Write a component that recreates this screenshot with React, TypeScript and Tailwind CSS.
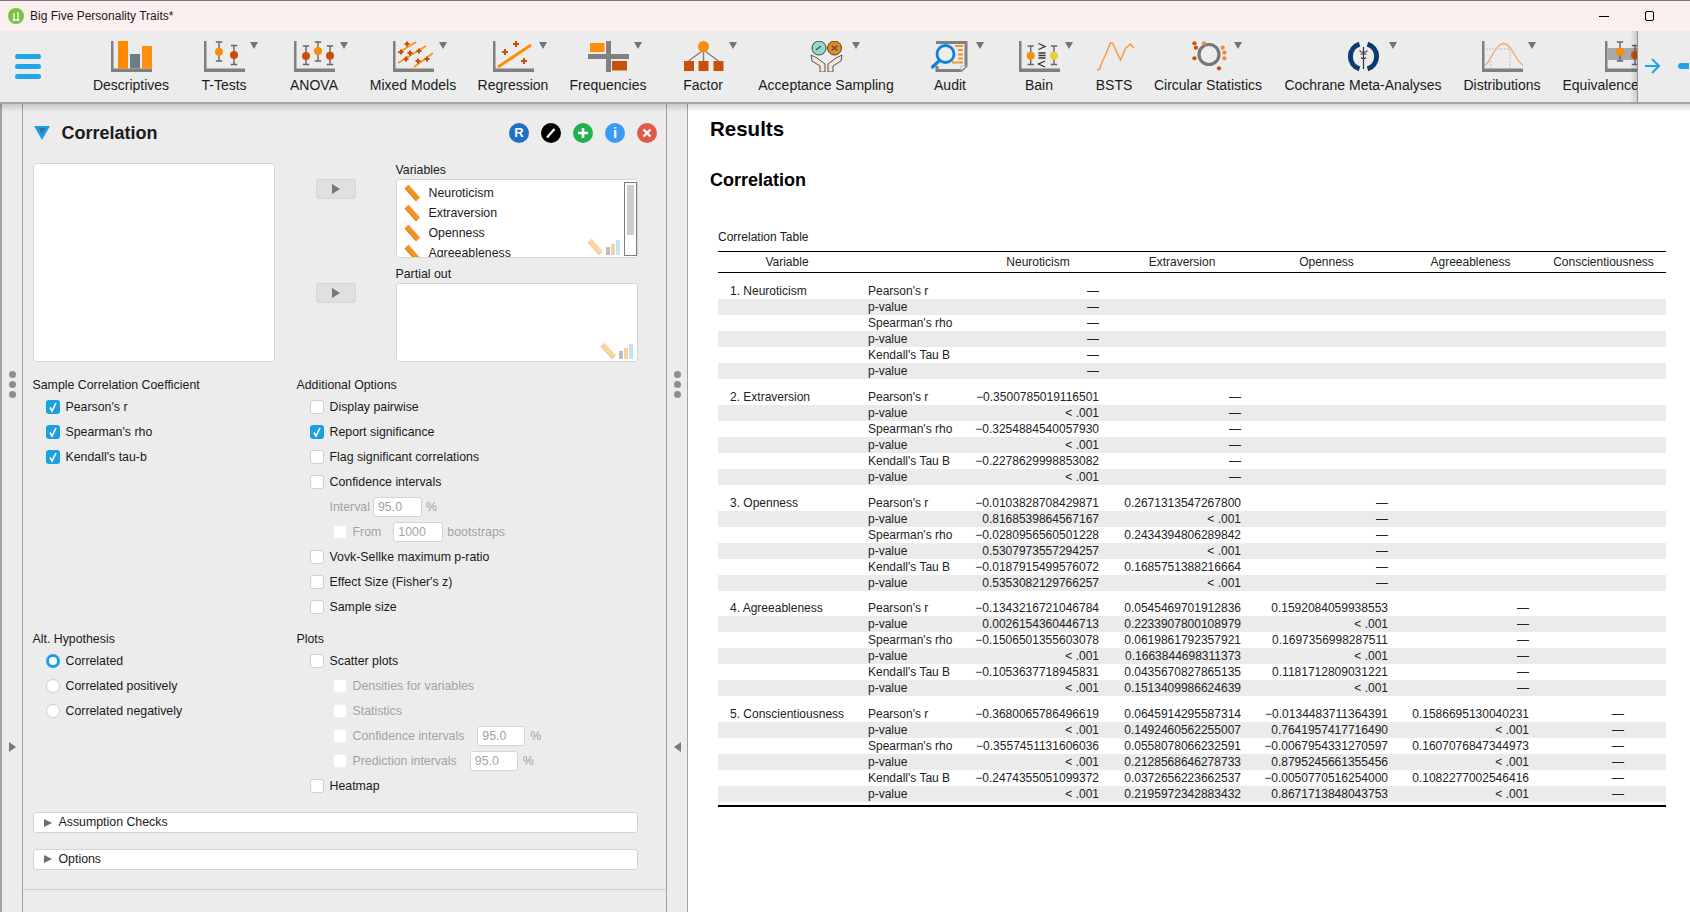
import React from "react";

const ORANGE = "#f98e0b";
const RUST = "#c8500a";
const AXIS = "#808080";

function Axes() {
  return (
    <>
      <rect x="0" y="0" width="2.5" height="31" fill={AXIS} />
      <rect x="0" y="27.5" width="41" height="3.5" fill={AXIS} />
    </>
  );
}

function Whisker({ x, top, bottom, dot, color, r = 4 }: { x: number; top: number; bottom: number; dot: number; color: string; r?: number }) {
  return (
    <>
      <path d={`M${x - 3.2} ${top}H${x + 3.2}M${x} ${top}V${bottom}M${x - 3.2} ${bottom}H${x + 3.2}`} stroke="#666" strokeWidth="1.4" fill="none" />
      <circle cx={x} cy={dot} r={r} fill={color} />
    </>
  );
}

function Plus({ x, y, color = RUST, s = 3 }: { x: number; y: number; color?: string; s?: number }) {
  return <path d={`M${x - s} ${y}H${x + s}M${x} ${y - s}V${y + s}`} stroke={color} strokeWidth="2" fill="none" />;
}

function Icon({ children, w = 41 }: { children: React.ReactNode; w?: number }) {
  return (
    <svg viewBox={`0 0 ${w} 31`} className="block h-[31px] shrink-0" width={w}>
      {children}
    </svg>
  );
}

const icons: Record<string, React.ReactNode> = {
  descriptives: (
    <Icon>
      <Axes />
      <rect x="7" y="0" width="10" height="27.5" fill="#ff8a00" />
      <rect x="19" y="13" width="10" height="14.5" fill="#6f7b85" />
      <rect x="31" y="5" width="10" height="22.5" fill="#ff8f10" />
    </Icon>
  ),
  ttests: (
    <Icon>
      <Axes />
      <Whisker x={15} top={1} bottom={20} dot={10.7} color={ORANGE} />
      <Whisker x={30} top={4.5} bottom={23.5} dot={14} color={RUST} />
    </Icon>
  ),
  anova: (
    <Icon>
      <Axes />
      <Whisker x={12} top={5} bottom={23.5} dot={15} color={RUST} />
      <Whisker x={24} top={1} bottom={20} dot={10} color={ORANGE} />
      <Whisker x={36} top={5} bottom={23.5} dot={14.7} color={RUST} />
    </Icon>
  ),
  mixed: (
    <Icon>
      <Axes />
      <path d="M5 12L23 1M5 22L33 5M21 26L40 12" stroke="#f4932a" strokeWidth="1.8" fill="none" />
      <Plus x={14} y={3} s={2.5} />
      <Plus x={8} y={11} s={2.5} />
      <Plus x={17} y={12} s={2.5} />
      <Plus x={26} y={10} s={2.5} />
      <Plus x={13} y={18} s={2.5} />
      <Plus x={25} y={20} s={2.5} />
      <Plus x={34} y={18} s={2.5} />
    </Icon>
  ),
  regression: (
    <Icon>
      <Axes />
      <path d="M5 26L38 4" stroke="#f98e0b" strokeWidth="3" fill="none" />
      <Plus x={23} y={3} />
      <Plus x={12} y={11} />
      <Plus x={31} y={20} />
    </Icon>
  ),
  frequencies: (
    <Icon>
      <rect x="2" y="2" width="14.5" height="9" fill="#ff8f00" />
      <rect x="18" y="0" width="5" height="31" fill={AXIS} />
      <rect x="0" y="13" width="41" height="5" fill={AXIS} />
      <rect x="24" y="20" width="15" height="9.5" fill={RUST} />
    </Icon>
  ),
  factor: (
    <Icon>
      <path d="M20.5 9L5.5 20M20.5 9V20M20.5 9L35.5 20" stroke={AXIS} strokeWidth="1.5" fill="none" />
      <circle cx="20.5" cy="5.5" r="5.5" fill={ORANGE} />
      <rect x="1" y="20" width="10" height="10" fill={RUST} />
      <rect x="15.5" y="20" width="10" height="10" fill={RUST} />
      <rect x="30.5" y="20" width="10" height="10" fill={RUST} />
    </Icon>
  ),
  acceptance: (
    <Icon>
      <path d="M5 14L6 20L14 25V31H19V23L11 17ZM36 14L35 20L27 25V31H22V23L30 17Z" fill="#f7e6d3" stroke="#555" strokeWidth="1" />
      <circle cx="13" cy="7" r="7" fill="#8fdcc8" stroke="#444" strokeWidth="1" />
      <circle cx="28.5" cy="7" r="7" fill="#e88a1a" stroke="#444" strokeWidth="1" />
      <path d="M10 9L15 5M25.5 4.5L31.5 9.5M31.5 4.5L25.5 9.5" stroke="#555" strokeWidth="1.6" fill="none" />
    </Icon>
  ),
  audit: (
    <Icon>
      <path d="M6 1.5H36V25L31 29.5H7V25" stroke={AXIS} strokeWidth="3" fill="none" />
      <path d="M31 29.5V25H36" stroke="#b0b0b0" strokeWidth="1" fill="#fff" />
      <path d="M25 5H33M28 9H33M28 13.5H33M28 17.5H33M22 21.5H33" stroke="#f4932a" strokeWidth="2.2" fill="none" />
      <circle cx="15.5" cy="13" r="8.5" stroke="#0f7fe0" strokeWidth="2.8" fill="#ececec" fillOpacity="0.6" />
      <path d="M9 20L2.5 26" stroke="#0f7fe0" strokeWidth="3.2" strokeLinecap="round" fill="none" />
    </Icon>
  ),
  bain: (
    <Icon>
      <Axes />
      <Whisker x={11.7} top={5} bottom={23.5} dot={14.7} color={ORANGE} />
      <Whisker x={35} top={5} bottom={23.5} dot={14.7} color="#e6d22e" />
      <path d="M19.5 2.5L26 5.5L19.5 8.5M19.5 12H26.5M19.5 14.5H26.5M19.5 17H26.5M26 20L19.5 23L26 26" stroke="#333" strokeWidth="1.3" fill="none" />
    </Icon>
  ),
  bsts: (
    <Icon>
      <path d="M3.2 29L5.5 28.3L8.2 20.7L11.5 14L16.5 1.7L18.8 2.3L23.2 12.3L26.5 19L31.5 7.3L36.5 3L39.8 7.3" stroke="#f59a45" strokeWidth="1.5" fill="none" />
    </Icon>
  ),
  circular: (
    <Icon>
      <circle cx="21" cy="13.5" r="10" stroke="#777" strokeWidth="3.2" fill="none" />
      {[
        [6.4, 2.3, RUST],
        [16, 2.3, "#f08a2b"],
        [8, 6.7, RUST],
        [34.7, 6.7, "#f08a2b"],
        [36.4, 11.7, "#f08a2b"],
        [36.4, 17.3, "#f08a2b"],
        [31, 27.3, RUST],
        [6.4, 17.3, RUST],
      ].map(([x, y, c], i) => (
        <circle key={i} cx={x as number} cy={y as number} r="2.1" fill={c as string} />
      ))}
    </Icon>
  ),
  cochrane: (
    <Icon>
      <path d="M16.5 3.1A13 13 0 0 0 16.5 27.9M24.5 3.1A13 13 0 0 1 24.5 27.9" stroke="#0b3a70" strokeWidth="5" fill="none" />
      <path d="M20.5 6V28M16.5 9.5C18 12 23 12 24.5 9.5M17.5 13H23.5M18 16.5C20 18.5 21 18.5 23 16.5" stroke="#333" strokeWidth="1.2" fill="none" />
    </Icon>
  ),
  distributions: (
    <Icon>
      <Axes />
      <path d="M4 8H28M28 8V27" stroke="#b5b5b5" strokeWidth="1" strokeDasharray="1.5 1.5" fill="none" />
      <path d="M9 20V27" stroke="#b5b5b5" strokeWidth="1" strokeDasharray="1.5 1.5" fill="none" />
      <path d="M3.5 24C9 20 13 3 22 2.5C30 3 33 20 41 24" stroke="#f5a875" strokeWidth="1.4" fill="none" />
    </Icon>
  ),
  equivalence: (
    <Icon>
      <Axes />
      <rect x="2.5" y="7" width="38.5" height="12" fill="#a8a8a8" />
      <Whisker x={15} top={1} bottom={20} dot={10.7} color={ORANGE} />
      <Whisker x={30} top={4.5} bottom={23.5} dot={14} color={RUST} />
    </Icon>
  ),
};

const tools = [
  { label: "Descriptives", icon: "descriptives", w: "w-[100px]", menu: false },
  { label: "T-Tests", icon: "ttests", w: "w-[86px]", menu: true },
  { label: "ANOVA", icon: "anova", w: "w-[94px]", menu: true },
  { label: "Mixed Models", icon: "mixed", w: "w-[104px]", menu: true },
  { label: "Regression", icon: "regression", w: "w-[96px]", menu: true },
  { label: "Frequencies", icon: "frequencies", w: "w-[94px]", menu: true },
  { label: "Factor", icon: "factor", w: "w-[96px]", menu: true },
  { label: "Acceptance Sampling", icon: "acceptance", w: "w-[150px]", menu: true },
  { label: "Audit", icon: "audit", w: "w-[98px]", menu: true },
  { label: "Bain", icon: "bain", w: "w-[80px]", menu: true },
  { label: "BSTS", icon: "bsts", w: "w-[70px]", menu: false },
  { label: "Circular Statistics", icon: "circular", w: "w-[118px]", menu: true },
  { label: "Cochrane Meta-Analyses", icon: "cochrane", w: "w-[192px]", menu: true },
  { label: "Distributions", icon: "distributions", w: "w-[86px]", menu: true },
  { label: "Equivalence T-Tests", icon: "equivalence", w: "w-[160px]", menu: true },
];

function Ruler({ faded = false }: { faded?: boolean }) {
  return (
    <svg viewBox="0 0 16 16" className={`block h-4 w-4 shrink-0 ${faded ? "opacity-40" : ""}`}>
      <path d="M2.5 1.5L14 14.5" stroke="#f59322" strokeWidth="5.5" fill="none" />
      <path d="M1 3.5L12.5 16" stroke="#c96f12" strokeWidth="0.8" fill="none" />
    </svg>
  );
}

function TypeBars() {
  return (
    <div className="flex h-4 items-end gap-px">
      <div className="h-2 w-1 bg-[#bdbdbd]" />
      <div className="h-[11px] w-1 bg-[#fbcf9f]" />
      <div className="h-[15px] w-1 bg-[#bfe4fb]" />
    </div>
  );
}

function Check({ on = false, dim = false }: { on?: boolean; dim?: boolean }) {
  if (on) {
    return (
      <span className="flex h-[14px] w-[14px] shrink-0 items-center justify-center rounded-[3px] bg-[#1ba1e2]">
        <svg viewBox="0 0 14 14" className="h-[14px] w-[14px]">
          <path d="M4 7.5L6 11L10 3" stroke="#fff" strokeWidth="1.6" fill="none" />
        </svg>
      </span>
    );
  }
  return <span className={`block h-[14px] w-[14px] shrink-0 rounded-[3px] bg-white ${dim ? "border border-[#f0f0f0]" : "border border-[#cfcfcf]"}`} />;
}

function Opt({ label, on, dim, inset }: { label: string; on?: boolean; dim?: boolean; inset?: boolean }) {
  return (
    <div className={`flex h-[25px] items-center gap-[6px] ${inset ? "pl-[36px]" : "pl-[13px]"}`}>
      <Check on={on} dim={dim} />
      <span className={dim ? "text-[#a3a3a3]" : ""}>{label}</span>
    </div>
  );
}

function Radio({ label, on }: { label: string; on?: boolean }) {
  return (
    <div className="flex h-[25px] items-center gap-[6px] pl-[13px]">
      <span className={`block h-[14px] w-[14px] rounded-full bg-white ${on ? "border-[3px] border-[#1ba1e2]" : "border border-[#cfcfcf]"}`} />
      <span>{label}</span>
    </div>
  );
}

function NumBox({ value, w }: { value: string; w: string }) {
  return (
    <span className={`flex h-5 items-center rounded-[3px] border border-[#d4d4d4] bg-white pl-1 text-[#a3a3a3] ${w}`}>{value}</span>
  );
}

function Expander({ label }: { label: string }) {
  return (
    <div className="flex h-[21px] items-center rounded-[3px] border border-[#d2d2d2] bg-white pl-[10px]">
      <span className="h-0 w-0 border-y-[4.5px] border-l-[8px] border-y-transparent border-l-[#6e6e6e]" />
      <span className="ml-[7px]">{label}</span>
    </div>
  );
}

function Dots() {
  return (
    <div className="flex flex-col gap-[3px]">
      <span className="block h-[7px] w-[7px] rounded-full bg-[#8e8e8e]" />
      <span className="block h-[7px] w-[7px] rounded-full bg-[#8e8e8e]" />
      <span className="block h-[7px] w-[7px] rounded-full bg-[#8e8e8e]" />
    </div>
  );
}

function AssignButton({ className }: { className: string }) {
  return (
    <div className={`flex h-5 w-[40px] items-center justify-center rounded-[3px] border border-[#d6d6d6] bg-[#e0e0e0] ${className}`}>
      <span className="h-0 w-0 border-y-[5px] border-l-[8px] border-y-transparent border-l-[#777]" />
    </div>
  );
}

const TESTS = ["Pearson's r", "p-value", "Spearman's rho", "p-value", "Kendall's Tau B", "p-value"];
const P = "< .001";
const DASHES = ["—", "—", "—", "—", "—", "—"];

const groups: { name: string; gap: string; cols: string[][] }[] = [
  { name: "1. Neuroticism", gap: "h-[10px]", cols: [DASHES] },
  {
    name: "2. Extraversion",
    gap: "h-[10px]",
    cols: [["−0.3500785019116501", P, "−0.3254884540057930", P, "−0.2278629998853082", P], DASHES],
  },
  {
    name: "3. Openness",
    gap: "h-[10px]",
    cols: [
      ["−0.0103828708429871", "0.8168539864567167", "−0.0280956560501228", "0.5307973557294257", "−0.0187915499576072", "0.5353082129766257"],
      ["0.2671313547267800", P, "0.2434394806289842", P, "0.1685751388216664", P],
      DASHES,
    ],
  },
  {
    name: "4. Agreeableness",
    gap: "h-[9px]",
    cols: [
      ["−0.1343216721046784", "0.0026154360446713", "−0.1506501355603078", P, "−0.1053637718945831", P],
      ["0.0545469701912836", "0.2233907800108979", "0.0619861792357921", "0.1663844698311373", "0.0435670827865135", "0.1513409986624639"],
      ["0.1592084059938553", P, "0.1697356998287511", P, "0.1181712809031221", P],
      DASHES,
    ],
  },
  {
    name: "5. Conscientiousness",
    gap: "h-[10px]",
    cols: [
      ["−0.3680065786496619", P, "−0.3557451131606036", P, "−0.2474355051099372", P],
      ["0.0645914295587314", "0.1492460562255007", "0.0558078066232591", "0.2128568646278733", "0.0372656223662537", "0.2195972342883432"],
      ["−0.0134483711364391", "0.7641957417716490", "−0.0067954331270597", "0.8795245661355456", "−0.0050770516254000", "0.8671713848043753"],
      ["0.1586695130040231", P, "0.1607076847344973", P, "0.1082277002546416", P],
      DASHES,
    ],
  },
];

function ResultsTable() {
  return (
    <table className="w-[948px] table-fixed border-collapse text-[12px] leading-[16px] text-[#222]">
      <colgroup>
        <col className="w-[138px]" />
        <col className="w-[109px]" />
        <col className="w-[146px]" />
        <col className="w-[142px]" />
        <col className="w-[147px]" />
        <col className="w-[141px]" />
        <col className="w-[125px]" />
      </colgroup>
      <thead>
        <tr className="h-[21px] border-y border-black">
          <th className="text-center font-normal">Variable</th>
          <th />
          <th className="text-center font-normal">Neuroticism</th>
          <th className="text-center font-normal">Extraversion</th>
          <th className="text-center font-normal">Openness</th>
          <th className="text-center font-normal">Agreeableness</th>
          <th className="text-center font-normal">Conscientiousness</th>
        </tr>
      </thead>
      {groups.map((g) => (
        <tbody key={g.name}>
          <tr className={g.gap}>
            <td colSpan={7} className="p-0" />
          </tr>
          {TESTS.map((t, i) => (
            <tr key={i} className={`h-4 ${i % 2 === 1 ? "bg-[#ebebeb]" : ""}`}>
              <td className="whitespace-nowrap p-0 pl-[12px]">{i === 0 ? g.name : ""}</td>
              <td className="whitespace-nowrap p-0 pl-[12px]">{t}</td>
              {[0, 1, 2, 3, 4].map((c) => (
                <td key={c} className={`whitespace-nowrap p-0 text-right ${c === 4 ? "pr-[42px]" : "pr-[12px]"}`}>
                  {g.cols[c] ? g.cols[c][i] : ""}
                </td>
              ))}
            </tr>
          ))}
        </tbody>
      ))}
    </table>
  );
}

export default function App() {
  return (
    <div className="flex h-[912px] w-[1690px] flex-col overflow-hidden bg-white font-['Liberation_Sans',Arial,sans-serif] text-[12.35px] text-[#1a1a1a]">
      {/* Title bar */}
      <div className="flex h-[31px] shrink-0 items-center border-t border-[#777] bg-[#faf0f0] pl-[8px] pr-[36px] text-[12px]">
        <svg viewBox="0 0 16 16" className="h-4 w-4">
          <circle cx="8" cy="8" r="8" fill="#7cc242" />
          <path d="M6 11.5V5M10 11.5V4M4.5 12H11.5" stroke="#fff" strokeWidth="1.3" fill="none" />
        </svg>
        <span className="ml-[6px]">Big Five Personality Traits*</span>
        <div className="ml-auto flex items-center gap-[36px]">
          <span className="block h-px w-[10px] bg-black" />
          <span className="block h-[10px] w-[9px] rounded-[2px] border border-black" />
        </div>
      </div>

      {/* Ribbon */}
      <div className="flex h-[73px] shrink-0 border-b-2 border-[#a3a3a3] bg-[#ececec] text-[14px]">
        <div className="flex min-w-0 flex-1 overflow-hidden">
          <div className="flex w-[81px] shrink-0 flex-col gap-[5px] pl-[15px] pt-[23px]">
            <span className="block h-[5px] w-[26px] rounded-full bg-[#1fa5ea]" />
            <span className="block h-[5px] w-[26px] rounded-full bg-[#1fa5ea]" />
            <span className="block h-[5px] w-[26px] rounded-full bg-[#1fa5ea]" />
          </div>
          {tools.map((t) => (
            <div key={t.label} className={`relative flex shrink-0 flex-col items-center pt-[10px] ${t.w}`}>
              {icons[t.icon]}
              <span className="mt-[5px] whitespace-nowrap leading-[16px]">{t.label}</span>
              {t.menu && t.icon !== "equivalence" && (
                <span className="absolute left-[calc(50%+26px)] top-[11px] h-0 w-0 border-x-[4px] border-t-[7px] border-x-transparent border-t-[#6b7680]" />
              )}
            </div>
          ))}
        </div>
        <div className="relative flex w-[53px] shrink-0 items-center overflow-visible border-l border-[#a8a8a8] pl-[6px] pb-[2px]">
          <div className="absolute right-full top-0 h-full w-2 bg-linear-to-l from-black/15 to-transparent" />
          <svg viewBox="0 0 16 18" className="h-[18px] w-4 shrink-0">
            <path d="M1 9H14M8 2L15 9L8 16" stroke="#1fa5ea" strokeWidth="2" fill="none" />
          </svg>
          <div className="ml-[18px] flex h-[28px] w-[11px] shrink-0 items-center overflow-hidden">
            <svg viewBox="0 0 28 28" className="h-[28px] w-[28px] shrink-0">
              <path d="M3 14H25M14 3V25" stroke="#1fa5ea" strokeWidth="6" strokeLinecap="round" fill="none" />
            </svg>
          </div>
        </div>
      </div>

      {/* Main area */}
      <div className="relative flex min-h-0 flex-1">
        <div className="pointer-events-none absolute inset-x-0 top-0 z-10 h-2 bg-linear-to-b from-black/15 to-transparent" />

        {/* Left handle */}
        <div className="relative flex w-[23px] shrink-0 flex-col items-center border-l-2 border-r border-[#a3a3a3] bg-[#ececec] pt-[267px]">
          <Dots />
          <span className="mt-[344px] h-0 w-0 border-y-[5.5px] border-l-[7px] border-y-transparent border-l-[#7a7a7a]" />
        </div>

        {/* Options panel */}
        <div className="flex w-[643px] shrink-0 flex-col bg-[#ececec]">
          <div className="pl-[9.5px] pr-[28px]">
            <div className="-mr-[19px] mt-[15px] flex h-[28px] items-center">
              <svg viewBox="0 0 16 14" className="ml-px h-[14px] w-4">
                <path d="M0 0H16L8 14Z" fill="#1c9ee6" />
                <path d="M5 2H11L8 8Z" fill="#4a6a80" />
              </svg>
              <span className="ml-[12px] text-[18px] font-bold">Correlation</span>
              <div className="ml-auto flex items-center gap-[12px]">
                <span className="flex h-5 w-5 items-center justify-center rounded-full bg-[#1f6fc8] text-[13px] font-bold text-white">R</span>
                <span className="flex h-5 w-5 items-center justify-center rounded-full bg-black">
                  <svg viewBox="0 0 20 20" className="h-5 w-5">
                    <path d="M6 14.5L13.5 6" stroke="#fff" strokeWidth="2.2" fill="none" />
                  </svg>
                </span>
                <span className="flex h-5 w-5 items-center justify-center rounded-full bg-[#22b14c]">
                  <svg viewBox="0 0 20 20" className="h-5 w-5">
                    <path d="M5 10H15M10 5V15" stroke="#fff" strokeWidth="2.6" fill="none" />
                  </svg>
                </span>
                <span className="flex h-5 w-5 items-center justify-center rounded-full bg-[#3a9bf5] text-[15px] font-bold text-white">i</span>
                <span className="flex h-5 w-5 items-center justify-center rounded-full bg-[#e05a4b]">
                  <svg viewBox="0 0 20 20" className="h-5 w-5">
                    <path d="M6.5 6.5L13.5 13.5M13.5 6.5L6.5 13.5" stroke="#fff" strokeWidth="2.4" fill="none" />
                  </svg>
                </span>
              </div>
            </div>

            <div className="mt-[16px] flex">
              <div className="h-[199px] w-[242px] shrink-0 rounded-[3px] border border-[#d6d6d6] bg-white" />
              <div className="ml-[41px] w-[40px] shrink-0">
                <AssignButton className="mt-[16px]" />
                <AssignButton className="mt-[84px]" />
              </div>
              <div className="ml-[40px] w-[242px] shrink-0">
                <div className="h-[14px] leading-[14px]">Variables</div>
                <div className="relative mt-[2px] h-[79px] overflow-hidden rounded-[3px] border border-[#d6d6d6] bg-white pl-[7px] pt-[3px]">
                  {["Neuroticism", "Extraversion", "Openness", "Agreeableness"].map((v) => (
                    <div key={v} className="flex h-5 items-center gap-[9px]">
                      <Ruler />
                      <span>{v}</span>
                    </div>
                  ))}
                  <div className="absolute right-[17px] top-[59px] flex items-end gap-[3px]">
                    <Ruler faded />
                    <TypeBars />
                  </div>
                  <div className="absolute right-0 top-[2px] h-[74px] w-[13px] border border-[#7d7d7d] bg-white p-[2px]">
                    <div className="h-[50px] bg-[#cdcdcd]" />
                  </div>
                </div>
                <div className="mt-[9px] h-[14px] leading-[14px]">Partial out</div>
                <div className="relative mt-[2px] h-[79px] rounded-[3px] border border-[#d6d6d6] bg-white">
                  <div className="absolute bottom-[2px] right-[4px] flex items-end gap-[3px]">
                    <Ruler faded />
                    <TypeBars />
                  </div>
                </div>
              </div>
            </div>

            <div className="mt-[15px] grid grid-cols-[264px_1fr]">
              <div>
                <div className="h-[17.5px] leading-[16px]">Sample Correlation Coefficient</div>
                <Opt label="Pearson's r" on />
                <Opt label="Spearman's rho" on />
                <Opt label="Kendall's tau-b" on />
              </div>
              <div>
                <div className="h-[17.5px] leading-[16px]">Additional Options</div>
                <Opt label="Display pairwise" />
                <Opt label="Report significance" on />
                <Opt label="Flag significant correlations" />
                <Opt label="Confidence intervals" />
                <div className="flex h-[25px] items-center pl-[33px] text-[#a3a3a3]">
                  <span>Interval</span>
                  <NumBox value="95.0" w="ml-[3px] w-[49px]" />
                  <span className="ml-[4px]">%</span>
                </div>
                <div className="flex h-[25px] items-center pl-[36px] text-[#a3a3a3]">
                  <Check dim />
                  <span className="ml-[6px]">From</span>
                  <NumBox value="1000" w="ml-[12px] w-[50px]" />
                  <span className="ml-[4px]">bootstraps</span>
                </div>
                <Opt label="Vovk-Sellke maximum p-ratio" />
                <Opt label="Effect Size (Fisher's z)" />
                <Opt label="Sample size" />
              </div>
            </div>

            <div className="mt-[11.5px] grid grid-cols-[264px_1fr]">
              <div>
                <div className="h-[17.5px] leading-[16px]">Alt. Hypothesis</div>
                <Radio label="Correlated" on />
                <Radio label="Correlated positively" />
                <Radio label="Correlated negatively" />
              </div>
              <div>
                <div className="h-[17.5px] leading-[16px]">Plots</div>
                <Opt label="Scatter plots" />
                <Opt label="Densities for variables" dim inset />
                <Opt label="Statistics" dim inset />
                <div className="flex h-[25px] items-center pl-[36px] text-[#a3a3a3]">
                  <Check dim />
                  <span className="ml-[6px]">Confidence intervals</span>
                  <NumBox value="95.0" w="ml-[13px] w-[48px]" />
                  <span className="ml-[5px]">%</span>
                </div>
                <div className="flex h-[25px] items-center pl-[36px] text-[#a3a3a3]">
                  <Check dim />
                  <span className="ml-[6px]">Prediction intervals</span>
                  <NumBox value="95.0" w="ml-[13px] w-[48px]" />
                  <span className="ml-[5px]">%</span>
                </div>
                <Opt label="Heatmap" />
              </div>
            </div>

            <div className="mt-[13.5px] flex flex-col gap-[15.5px]">
              <Expander label="Assumption Checks" />
              <Expander label="Options" />
            </div>
          </div>
          <div className="mt-[19px] border-t border-[#cfcfcf]" />
        </div>

        {/* Right handle */}
        <div className="flex w-[22px] shrink-0 flex-col items-center border-x border-[#a3a3a3] bg-[#ececec] pt-[267px]">
          <Dots />
          <span className="mt-[344px] h-0 w-0 border-y-[5.5px] border-r-[7px] border-y-transparent border-r-[#7a7a7a]" />
        </div>

        {/* Results */}
        <div className="min-w-0 flex-1 bg-white pl-[22px] pt-[13px]">
          <h1 className="text-[20.5px] font-bold leading-[24px] text-black">Results</h1>
          <h2 className="mt-[28px] text-[18px] font-bold leading-[22px] text-black">Correlation</h2>
          <div className="ml-[8px] mt-[39px] text-[12px] leading-[14px]">Correlation Table</div>
          <div className="ml-[8px] mt-[7px] w-[948px]">
            <ResultsTable />
            <div className="mt-[3px] h-[2.5px] bg-black" />
          </div>
        </div>
      </div>
    </div>
  );
}
